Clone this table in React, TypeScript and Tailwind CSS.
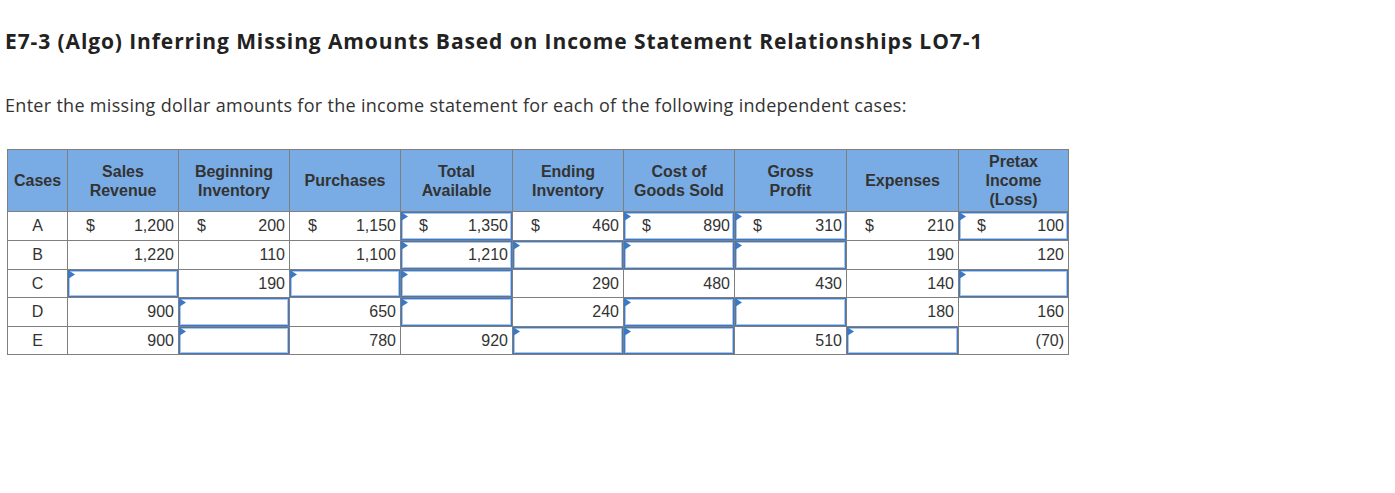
import React from "react";

type Cell = { v?: string; d?: boolean; inp?: boolean };

const P = (v: string, d = false): Cell => ({ v, d });
const I = (v = "", d = false): Cell => ({ v, d, inp: true });

const rows: { k: string; c: Cell[] }[] = [
  {
    k: "A",
    c: [P("1,200", true), P("200", true), P("1,150", true), I("1,350", true), P("460", true), I("890", true), I("310", true), P("210", true), I("100", true)],
  },
  { k: "B", c: [P("1,220"), P("110"), P("1,100"), I("1,210"), I(), I(), I(), P("190"), P("120")] },
  { k: "C", c: [I(), P("190"), I(), I(), P("290"), P("480"), P("430"), P("140"), I()] },
  { k: "D", c: [P("900"), I(), P("650"), I(), P("240"), I(), I(), P("180"), P("160")] },
  { k: "E", c: [P("900"), I(), P("780"), P("920"), I(), I(), P("510"), I(), P("(70)")] },
];

const headers: string[][] = [
  ["Sales", "Revenue"],
  ["Beginning", "Inventory"],
  ["Purchases"],
  ["Total", "Available"],
  ["Ending", "Inventory"],
  ["Cost of", "Goods Sold"],
  ["Gross", "Profit"],
  ["Expenses"],
  ["Pretax", "Income", "(Loss)"],
];

const widths = ["w-[111px]", "w-[111px]", "w-[111px]", "w-[112px]", "w-[111px]", "w-[111px]", "w-[112px]", "w-[112px]", "w-[110px]"];
const rowH = ["h-[28px]", "h-[28px]", "h-[27px]", "h-[28px]", "h-[27px]"];

function Flag() {
  return (
    <svg className="absolute left-[-1px] top-[-1px]" width="8" height="9" viewBox="0 0 8 9">
      <polygon points="0,0 7,4.5 0,9" fill="#3b78c6" />
    </svg>
  );
}

function Body({ cell, h }: { cell: Cell; h: string }) {
  if (cell.inp) {
    return (
      <div className={`relative ${h} border border-[#4677ba] shadow-[inset_0_0_0_1px_#aac8ee] flex items-center justify-between pl-[17px] pr-[3px] bg-white`}>
        <Flag />
        <span>{cell.d ? "$" : ""}</span>
        <span>{cell.v}</span>
      </div>
    );
  }
  return (
    <div className={`${h} flex items-center justify-between pl-[18px] pr-[4px]`}>
      <span>{cell.d ? "$" : ""}</span>
      <span>{cell.v}</span>
    </div>
  );
}

export default function App() {
  return (
    <div className="bg-white min-h-[493px] pt-[28px] pl-[5px] text-[#333]">
      <h1 className="text-[21px] leading-[26px] tracking-[0.9px] font-bold text-[#222] [font-family:'Open_Sans',sans-serif]">
        E7-3 (Algo) Inferring Missing Amounts Based on Income Statement Relationships LO7-1
      </h1>
      <p className="mt-[39px] text-[18px] leading-[24px] tracking-[0.3px] text-[#333] [font-family:'Open_Sans',sans-serif]">
        Enter the missing dollar amounts for the income statement for each of the following independent cases:
      </p>
      <table className="mt-[32px] ml-[2px] border-collapse table-fixed text-[16px] [font-family:'Liberation_Sans',Arial,sans-serif] text-[#333]">
        <colgroup>
          <col className="w-[60px]" />
          {widths.map((w, i) => (
            <col key={i} className={w} />
          ))}
        </colgroup>
        <thead>
          <tr>
            <th className="border border-[#7f7f7f] bg-[#79ace4] p-0 font-bold">
              <div className="h-[61px] flex items-center justify-center">Cases</div>
            </th>
            {headers.map((h, i) => (
              <th key={i} className="border border-[#7f7f7f] bg-[#79ace4] p-0 font-bold">
                <div className="h-[61px] flex flex-col items-center justify-center leading-[19px]">
                  {h.map((t) => (
                    <span key={t}>{t}</span>
                  ))}
                </div>
              </th>
            ))}
          </tr>
        </thead>
        <tbody>
          {rows.map((r, ri) => (
            <tr key={r.k}>
              <td className="border border-[#7f7f7f] p-0">
                <div className={`${rowH[ri]} flex items-center justify-center`}>{r.k}</div>
              </td>
              {r.c.map((c, i) => (
                <td key={i} className="border border-[#7f7f7f] p-0">
                  <Body cell={c} h={rowH[ri]} />
                </td>
              ))}
            </tr>
          ))}
        </tbody>
      </table>
    </div>
  );
}
